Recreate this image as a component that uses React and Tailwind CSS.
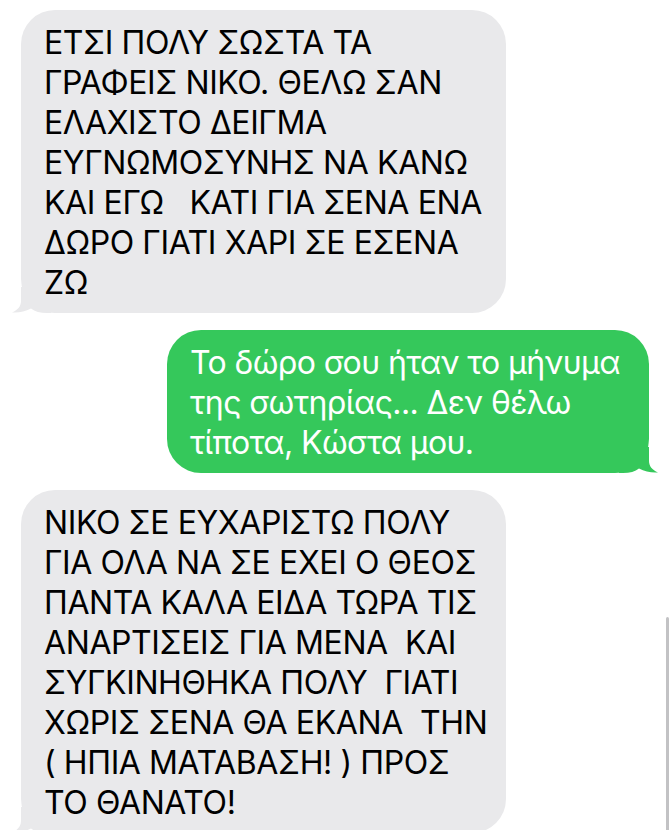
import React from "react";

const FONT = { fontFamily: "Inter, 'Noto Sans', sans-serif" };

function TailLeft() {
  return (
    <svg
      className="absolute bottom-0 left-[-10px]"
      width="40"
      height="26"
      viewBox="0 0 40 26"
    >
      <path
        d="M10 0 L10 14 C10 19 7 23 1 25.5 C8 26 14 24.5 20 21.5 C24 24.5 29 26 36 26 L40 26 L40 0 Z"
        fill="#e9e9eb"
      />
    </svg>
  );
}

function TailRight() {
  return (
    <svg
      className="absolute bottom-0 right-[-10px]"
      width="40"
      height="26"
      viewBox="0 0 40 26"
    >
      <path
        d="M30 0 L30 14 C30 19 33 23 39 25.5 C32 26 26 24.5 20 21.5 C16 24.5 11 26 4 26 L0 26 L0 0 Z"
        fill="#35c85b"
      />
    </svg>
  );
}

function Lines({ lines, className }) {
  return (
    <div className={"relative whitespace-pre text-[32px] leading-[40px] " + className} style={FONT}>
      {lines.map((l, i) => (
        <div key={i}>{l}</div>
      ))}
    </div>
  );
}

export default function App() {
  return (
    <div className="relative h-[830px] w-[670px] overflow-hidden bg-white">
      <div className="flex flex-col gap-[17px] pt-[10px]">
        <div className="relative ml-[21px] w-[485px] self-start rounded-[34px] bg-[#e9e9eb] pb-[10px] pl-[23px] pt-[13px] text-black">
          <TailLeft />
          <Lines
            className="tracking-[-0.4px]"
            lines={[
              "ΕΤΣΙ ΠΟΛΥ ΣΩΣΤΑ ΤΑ",
              "ΓΡΑΦΕΙΣ ΝΙΚΟ. ΘΕΛΩ ΣΑΝ",
              "ΕΛΑΧΙΣΤΟ ΔΕΙΓΜΑ",
              "ΕΥΓΝΩΜΟΣΥΝΗΣ ΝΑ ΚΑΝΩ",
              "ΚΑΙ ΕΓΩ   ΚΑΤΙ ΓΙΑ ΣΕΝΑ ΕΝΑ",
              "ΔΩΡΟ ΓΙΑΤΙ ΧΑΡΙ ΣΕ ΕΣΕΝΑ",
              "ΖΩ",
            ]}
          />
        </div>

        <div className="relative mr-[21px] w-[482px] self-end rounded-[34px] bg-[#35c85b] pb-[10px] pl-[23px] pt-[13px] text-white">
          <TailRight />
          <Lines
            className="tracking-[-0.6px]"
            lines={[
              "Το δώρο σου ήταν το μήνυμα",
              "της σωτηρίας... Δεν θέλω",
              "τίποτα, Κώστα μου.",
            ]}
          />
        </div>

        <div className="relative ml-[21px] w-[485px] self-start rounded-[34px] bg-[#e9e9eb] pb-[10px] pl-[23px] pt-[13px] text-black">
          <TailLeft />
          <Lines
            className="tracking-[-0.4px]"
            lines={[
              "ΝΙΚΟ ΣΕ ΕΥΧΑΡΙΣΤΩ ΠΟΛΥ",
              "ΓΙΑ ΟΛΑ ΝΑ ΣΕ ΕΧΕΙ Ο ΘΕΟΣ",
              "ΠΑΝΤΑ ΚΑΛΑ ΕΙΔΑ ΤΩΡΑ ΤΙΣ",
              "ΑΝΑΡΤΙΣΕΙΣ ΓΙΑ ΜΕΝΑ  ΚΑΙ",
              "ΣΥΓΚΙΝΗΘΗΚΑ ΠΟΛΥ  ΓΙΑΤΙ",
              "ΧΩΡΙΣ ΣΕΝΑ ΘΑ ΕΚΑΝΑ  ΤΗΝ",
              "( ΗΠΙΑ ΜΑΤΑΒΑΣΗ! ) ΠΡΟΣ",
              "ΤΟ ΘΑΝΑΤΟ!",
            ]}
          />
        </div>
      </div>
      <div className="absolute right-[1px] top-[617px] h-[220px] w-[3px] rounded-full bg-[#c2c2c4]" />
    </div>
  );
}
